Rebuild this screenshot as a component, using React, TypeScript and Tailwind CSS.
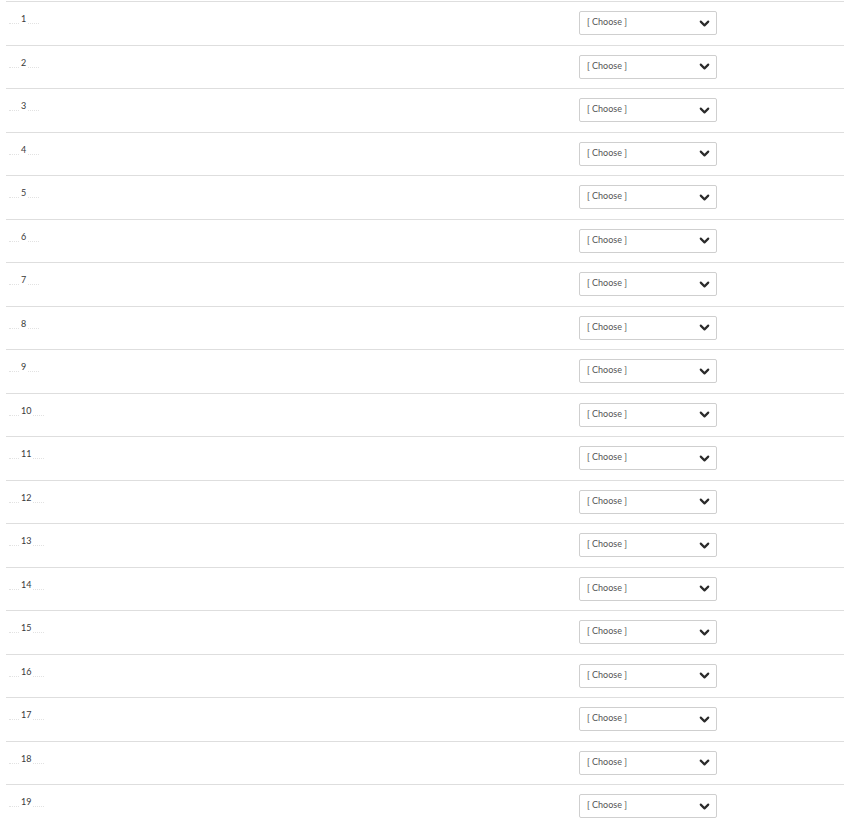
import { ChevronDown } from 'lucide-react'

const ROWS = Array.from({ length: 19 }, (_, i) => i + 1)

function Label({ n }: { n: number }) {
  return (
    <span className="inline-flex items-end leading-[10px]">
      <span className="w-[10px] h-[1px] border-b border-dotted border-[#e2e2e2] mr-[2px] translate-y-[1px]" />
      <span className="text-[9px] leading-[9px] text-[#3a3a3a]">{n}</span>
      <span className="w-[11px] h-[1px] border-b border-dotted border-[#e2e2e2] ml-[2px] translate-y-[1px]" />
    </span>
  )
}

function Choose() {
  return (
    <div className="w-[138px] h-[24px] border border-[#cfcfcf] rounded-[2px] bg-white flex items-center justify-between pl-[7px] pr-[4px]">
      <span className="text-[9px] leading-[10px] text-[#555] -mt-[2px]">[ Choose ]</span>
      <ChevronDown size={15} strokeWidth={3.4} className="text-[#2b2b2b]" />
    </div>
  )
}

export default function App() {
  return (
    <div className="w-[844px] h-[838px] bg-white pt-[1px] pl-[6px]" style={{ fontFamily: 'Lato, "Liberation Sans", sans-serif' }}>
      {ROWS.map(n => (
        <div key={n} className="h-[43.5px] border-t border-[#dedede] flex">
          <div className="w-[573px] pl-[3px] pt-[10px] leading-[10px]">
            <Label n={n} />
          </div>
          <div className="pt-[9px]">
            <Choose />
          </div>
        </div>
      ))}
    </div>
  )
}
